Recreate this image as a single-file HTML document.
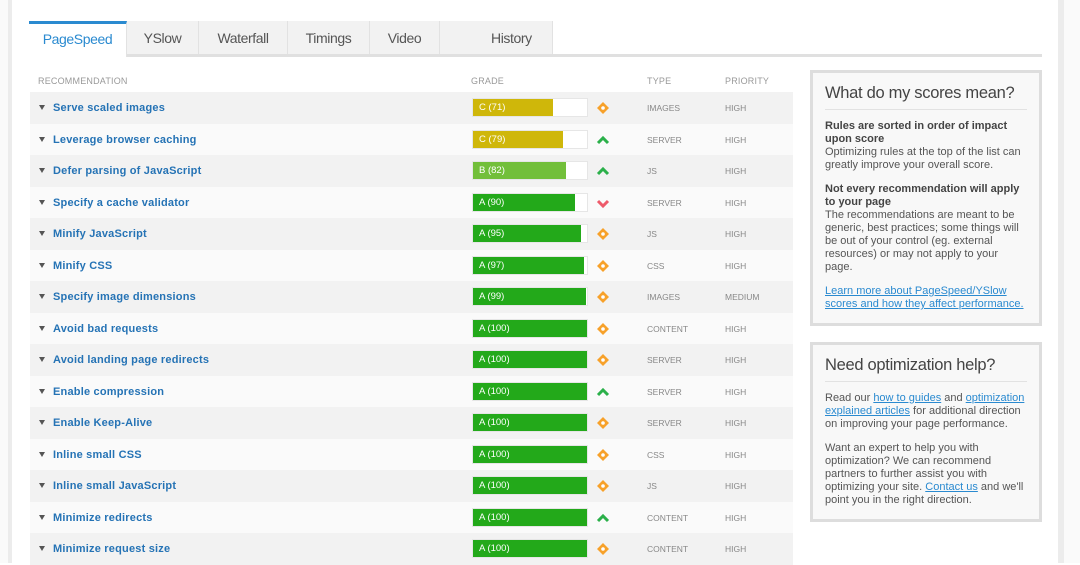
<!DOCTYPE html>
<html><head><meta charset="utf-8"><style>
*{margin:0;padding:0;box-sizing:border-box}
body{width:1080px;height:563px;overflow:hidden;background:#fff;font-family:"Liberation Sans",sans-serif;position:relative}
.edgeL{position:absolute;left:0;top:0;width:8px;height:563px;background:#fafafa}
.edgeL2{position:absolute;left:8px;top:0;width:4px;height:563px;background:#ececec}
.edgeR{position:absolute;left:1058px;top:0;width:6px;height:563px;background:#ececec}
.edgeR2{position:absolute;left:1064px;top:0;width:16px;height:563px;background:#fafafa}
.tab{position:absolute;top:21px;height:34px;background:#f2f2f2;border-right:1px solid #e2e2e2;color:#555;font-size:14px;text-align:center;line-height:35px;letter-spacing:-0.4px}
.tab.act{background:#fff;color:#2a8ad0;border-top:3px solid #2a8ad0;line-height:31px;height:36px}
.tline{position:absolute;left:127px;top:54px;width:915px;height:3px;background:#e0e0e0}
.hd{position:absolute;top:76px;font-size:9px;color:#999;letter-spacing:0.2px}
.row{position:absolute;left:30px;width:763px;height:31.5px}
.row .tri{position:absolute;left:9px;top:13px;width:0;height:0;border-left:3.5px solid transparent;border-right:3.5px solid transparent;border-top:5px solid #555}
.row .nm{position:absolute;left:23px;top:10px;font-size:11px;font-weight:bold;color:#2573b5;letter-spacing:0.2px}
.bar{position:absolute;left:442px;top:6px;width:116px;height:19px;background:#fff;border:1px solid #e6e6e6}
.fill{position:absolute;left:0;top:0;height:17px;color:#fff;font-size:9.5px;line-height:17px;padding-left:6px}
.ic{position:absolute;left:566px;top:9px;width:14px;height:14px}
.ty,.pr{position:absolute;top:11px;font-size:8.5px;color:#888}
.ty{left:617px}.pr{left:695px}
.box{position:absolute;left:810px;width:232px;background:#f8f8f8;border:3px solid #ddd;padding:10px 12px;color:#555;font-size:11px;line-height:13px}
.box h2{font-weight:normal;font-size:16.5px;letter-spacing:-0.3px;white-space:nowrap;color:#444;padding-bottom:6px;border-bottom:1px solid #e2e2e2;margin-bottom:10px;line-height:20px}
.box b{color:#444}
.box a{color:#2a8ad0;text-decoration:underline}
.box p{margin-bottom:11px}
</style></head><body>
<div class="edgeL"></div><div class="edgeL2"></div><div class="edgeR"></div><div class="edgeR2"></div>
<div class="tab act" style="left:29px;width:98px">PageSpeed</div>
<div class="tab" style="left:127px;width:72px">YSlow</div>
<div class="tab" style="left:199px;width:89px">Waterfall</div>
<div class="tab" style="left:288px;width:82px">Timings</div>
<div class="tab" style="left:370px;width:70px">Video</div>
<div class="tab" style="left:440px;width:113px;text-align:left;padding-left:51px">History</div>
<div class="tline"></div>
<div class="hd" style="left:38px">RECOMMENDATION</div>
<div class="hd" style="left:471px">GRADE</div>
<div class="hd" style="left:647px">TYPE</div>
<div class="hd" style="left:725px">PRIORITY</div>
<div id="rows"></div>
<div class="box" style="top:70px;height:256px">
<h2>What do my scores mean?</h2>
<p><b>Rules are sorted in order of impact upon score</b><br>Optimizing rules at the top of the list can greatly improve your overall score.</p>
<p><b>Not every recommendation will apply to your page</b><br>The recommendations are meant to be generic, best practices; some things will be out of your control (eg. external resources) or may not apply to your page.</p>
<p><a>Learn more about PageSpeed/YSlow scores and how they affect performance.</a></p>
</div>
<div class="box" style="top:342px;height:180px">
<h2>Need optimization help?</h2>
<p>Read our <a>how to guides</a> and <a>optimization explained articles</a> for additional direction on improving your page performance.</p>
<p>Want an expert to help you with optimization? We can recommend partners to further assist you with optimizing your site. <a>Contact us</a> and we'll point you in the right direction.</p>
</div>
<script>
var d=[["Serve scaled images","C",71,"d","IMAGES","HIGH"],["Leverage browser caching","C",79,"u","SERVER","HIGH"],["Defer parsing of JavaScript","B",82,"u","JS","HIGH"],["Specify a cache validator","A",90,"n","SERVER","HIGH"],["Minify JavaScript","A",95,"d","JS","HIGH"],["Minify CSS","A",97,"d","CSS","HIGH"],["Specify image dimensions","A",99,"d","IMAGES","MEDIUM"],["Avoid bad requests","A",100,"d","CONTENT","HIGH"],["Avoid landing page redirects","A",100,"d","SERVER","HIGH"],["Enable compression","A",100,"u","SERVER","HIGH"],["Enable Keep-Alive","A",100,"d","SERVER","HIGH"],["Inline small CSS","A",100,"d","CSS","HIGH"],["Inline small JavaScript","A",100,"d","JS","HIGH"],["Minimize redirects","A",100,"u","CONTENT","HIGH"],["Minimize request size","A",100,"d","CONTENT","HIGH"]];
var col={A:"#23a91a",B:"#72bf3a",C:"#cfb70a"};
var ic={d:'<svg class="ic" viewBox="0 0 14 14"><path d="M7 1L13 7L7 13L1 7Z" fill="#f7a12a"/><circle cx="7" cy="7" r="1.8" fill="#fff"/></svg>',
u:'<svg class="ic" viewBox="0 0 14 14"><path d="M2 10L7 5L12 10" stroke="#2bb04a" stroke-width="3" fill="none"/></svg>',
n:'<svg class="ic" viewBox="0 0 14 14"><path d="M2 5L7 10L12 5" stroke="#ee5a6a" stroke-width="3" fill="none"/></svg>'};
var h="";
d.forEach(function(r,i){var top=92+i*31.5;var w=Math.round(r[2]*1.16)-2;
h+='<div class="row" style="top:'+top+'px;background:'+(i%2?'#fafafa':'#f2f2f2')+'"><div class="tri"></div><div class="nm">'+r[0]+'</div><div class="bar"><div class="fill" style="width:'+w+'px;background:'+col[r[1]]+'">'+r[1]+' ('+r[2]+')</div></div>'+ic[r[3]]+'<div class="ty">'+r[4]+'</div><div class="pr">'+r[5]+'</div></div>';});
document.getElementById("rows").innerHTML=h;
</script>
</body></html>
